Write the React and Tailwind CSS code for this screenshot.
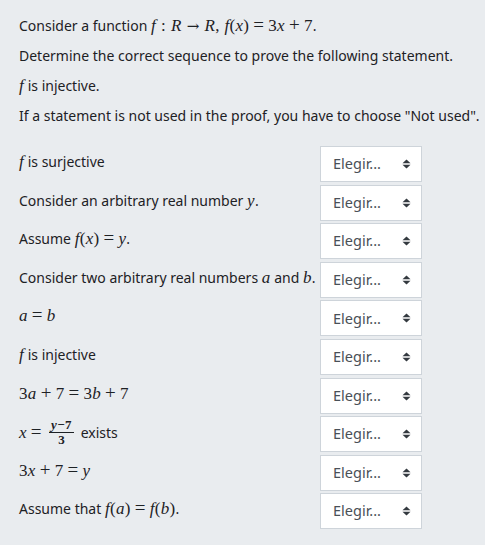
import React from "react";

const V = ({ children }) => <span className="italic">{children}</span>;

const M = ({ children }) => (
  <span className="font-['Liberation_Serif',serif] text-[17px] tracking-[0.3px] leading-none whitespace-nowrap">{children}</span>
);

const Op = ({ children }) => <span className="mx-[4px] text-[19px] leading-none">{children}</span>;

function Frac() {
  return (
    <span className="inline-flex flex-col items-center align-middle mx-[3px] font-['Liberation_Serif',serif] text-[13px] leading-[12px] font-bold -translate-y-[2px]">
      <span className="border-b border-[#1d2125] px-[2px] pb-[1px] tracking-[0.5px]">
        <span className="italic">y</span>−7
      </span>
      <span className="pt-[1px]">3</span>
    </span>
  );
}

function Select() {
  return (
    <div className="relative w-[102px] h-[36px] shrink-0">
      <select className="appearance-none w-full h-full bg-white border border-[#ced4da] pl-[12px] pr-[28px] text-[14.5px] text-[#495057] font-['Noto_Sans',sans-serif] outline-none">
        <option>Elegir...</option>
      </select>
      <svg className="pointer-events-none absolute left-[82px] top-[13px]" width="9" height="10" viewBox="0 0 9 10">
        <path d="M4.5 0.5 L8.5 4.3 L0.5 4.3 Z" fill="#343a40" />
        <path d="M4.5 9.5 L8.5 5.7 L0.5 5.7 Z" fill="#343a40" />
      </svg>
    </div>
  );
}

const rows = [
  <><M><V>f</V></M> is surjective</>,
  <>Consider an arbitrary real number <M><V>y</V></M>.</>,
  <>Assume <M><V>f</V>(<V>x</V>)<Op>=</Op><V>y</V></M>.</>,
  <>Consider two arbitrary real numbers <M><V>a</V></M> and <M><V>b</V></M>.</>,
  <M><V>a</V><Op>=</Op><V>b</V></M>,
  <><M><V>f</V></M> is injective</>,
  <M>3<V>a</V><Op>+</Op>7<Op>=</Op>3<V>b</V><Op>+</Op>7</M>,
  <><M><V>x</V><Op>=</Op></M><Frac /> exists</>,
  <M>3<V>x</V><Op>+</Op>7<Op>=</Op><V>y</V></M>,
  <>Assume that <M><V>f</V>(<V>a</V>)<Op>=</Op><V>f</V>(<V>b</V>)</M>.</>,
];

export default function App() {
  return (
    <div className="w-[485px] h-[545px] bg-[#e9ecef] text-[#1d2125] font-['Noto_Sans',sans-serif] text-[14px] pl-[19px] pt-[11px] overflow-hidden">
      <div className="flex flex-col">
        <p className="h-[30px] leading-[30px]">
          Consider a function{" "}
          <M>
            <V>f</V>
            <span className="mx-[5px] not-italic">:</span>
            <V>R</V>
            <span className="mx-[5px] font-['DejaVu_Serif',serif] text-[15px]">→</span>
            <V>R</V>, <V>f</V>(<V>x</V>)<Op>=</Op>3<V>x</V><Op>+</Op>7
          </M>
          .
        </p>
        <p className="h-[30px] leading-[30px]">Determine the correct sequence to prove the following statement.</p>
        <p className="h-[30px] leading-[30px]">
          <M><V>f</V></M> is injective.
        </p>
        <p className="h-[30px] leading-[30px] whitespace-nowrap">
          If a statement is not used in the proof, you have to choose "Not used".
        </p>
      </div>
      <div className="mt-[15px] flex flex-col">
        {rows.map((r, i) => (
          <div key={i} className="flex items-start h-[38.6px]">
            <div className="w-[301px] pt-[5px] leading-[22.5px] whitespace-nowrap">{r}</div>
            <Select />
          </div>
        ))}
      </div>
    </div>
  );
}
